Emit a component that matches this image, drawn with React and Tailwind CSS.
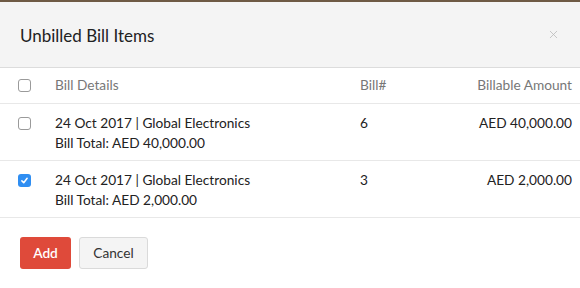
import { X } from "lucide-react";

const ROWS = [
  { date: "24 Oct 2017", vendor: "Global Electronics", total: "AED 40,000.00", bill: "6", amount: "AED 40,000.00", checked: false },
  { date: "24 Oct 2017", vendor: "Global Electronics", total: "AED 2,000.00", bill: "3", amount: "AED 2,000.00", checked: true },
];

function Box({ checked }) {
  return checked ? (
    <span className="flex h-[13px] w-[13px] items-center justify-center rounded-[3px] bg-[#2f8ef2]">
      <svg viewBox="0 0 12 12" className="h-[9px] w-[9px]" fill="none" stroke="white" strokeWidth="2" strokeLinecap="round" strokeLinejoin="round">
        <path d="M2.5 6.5 L5 9 L9.5 3" />
      </svg>
    </span>
  ) : (
    <span className="block h-[13px] w-[13px] rounded-[3px] border border-[#9a9a9a] bg-white" />
  );
}

export default function App() {
  return (
    <div className="h-[288px] w-[580px] overflow-hidden bg-white text-[13.7px] text-[#222]" style={{ fontFamily: "Lato, 'Open Sans', sans-serif" }}>
      <div className="h-[2px] bg-[#6e5a45]" />
      <div className="flex h-[66px] items-center justify-between border-b border-[#dcdcdc] bg-[#f4f4f4] pl-5 pr-[20px]">
        <h2 className="pt-[2px] text-[17px] text-[#222]">Unbilled Bill Items</h2>
        <X className="h-[13px] w-[13px] text-[#bbb]" strokeWidth={1.5} />
      </div>

      <div className="flex h-[36px] items-center border-b border-[#e8e8e8] text-[#777]">
        <div className="w-[55px] pl-[18px]"><Box checked={false} /></div>
        <div className="w-[305px]">Bill Details</div>
        <div className="flex-1">Bill#</div>
        <div className="pr-2 text-right">Billable Amount</div>
      </div>

      {ROWS.map((r, i) => (
        <div key={i} className="flex h-[57px] items-start border-b border-[#e8e8e8] pt-[9px]">
          <div className="w-[55px] pl-[18px] pt-[4px]"><Box checked={r.checked} /></div>
          <div className="w-[305px] leading-[20px]">
            <div>{r.date} | {r.vendor}</div>
            <div>Bill Total: {r.total}</div>
          </div>
          <div className="flex-1 leading-[20px]">{r.bill}</div>
          <div className="pr-2 text-right leading-[20px]">{r.amount}</div>
        </div>
      ))}

      <div className="flex gap-2 px-5 pt-[19px]">
        <button className="h-[32px] w-[51px] rounded-[3px] bg-[#df4a3a] font-semibold text-white">Add</button>
        <button className="h-[32px] w-[69px] rounded-[3px] border border-[#dadada] bg-[#f4f4f4] text-[#333]">Cancel</button>
      </div>
    </div>
  );
}
